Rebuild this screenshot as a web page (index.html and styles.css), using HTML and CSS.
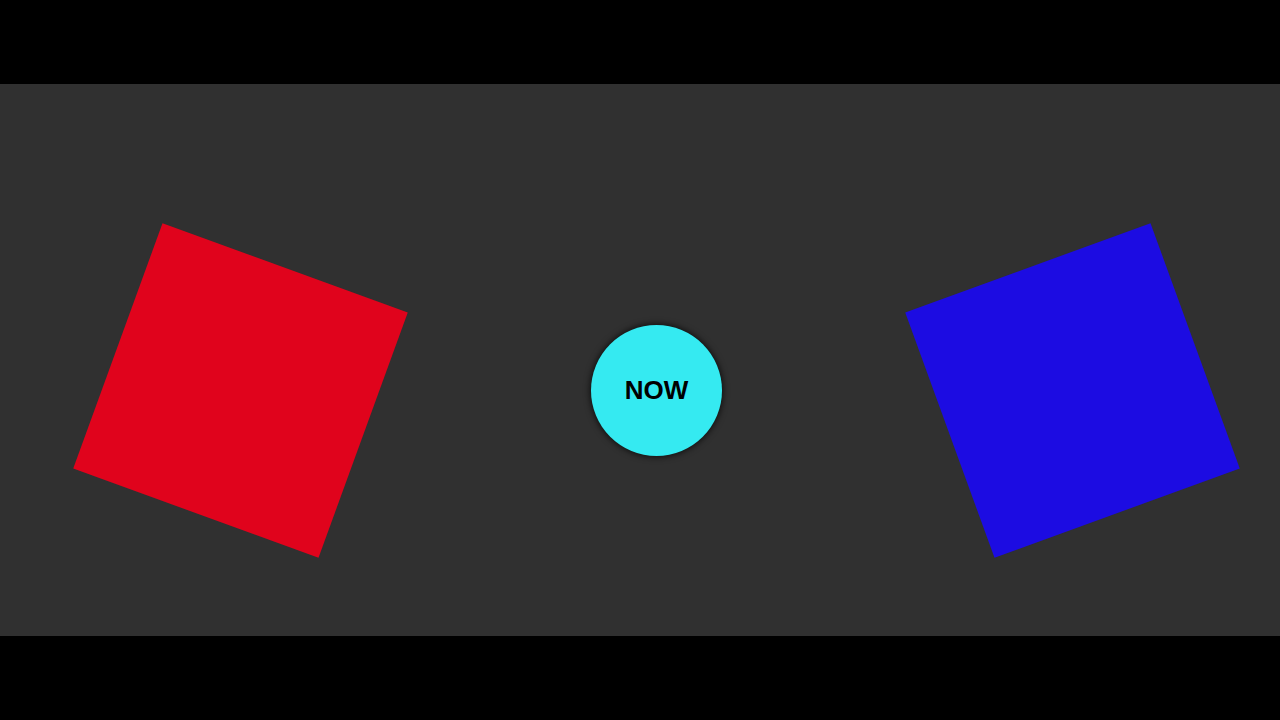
FILE: index.html
```html
<!DOCTYPE html>
<html>
<head>
<meta charset="utf-8">
<link rel="stylesheet" href="styles.css">
</head>
<body>
<div class="bar"></div>
<main class="stage">
  <div class="square red"></div>
  <div class="now">NOW</div>
  <div class="square blue"></div>
</main>
<div class="bar"></div>
</body>
</html>
```
FILE: styles.css
```css
html, body {
  margin: 0;
  padding: 0;
  background: #000;
  width: 1280px;
  height: 720px;
  overflow: hidden;
  font-family: "Liberation Sans", Arial, sans-serif;
}
.bar {
  height: 84px;
  background: #000;
}
.stage {
  height: 552px;
  background: #303030;
  display: flex;
  align-items: center;
  box-sizing: border-box;
  padding-left: 110px;
  padding-top: 60px;
  gap: 220px;
}
.square {
  width: 261px;
  height: 261px;
  flex: none;
}
.red {
  background: #e0031c;
  transform: rotate(20deg);
}
.blue {
  background: #1c0ce2;
  transform: rotate(-20deg);
}
.now {
  width: 131px;
  height: 131px;
  flex: none;
  border-radius: 50%;
  background: #35eaf1;
  box-shadow: 0 0 6px 1px rgba(0, 0, 0, 0.7);
  display: flex;
  align-items: center;
  justify-content: center;
  font-weight: bold;
  font-size: 26px;
  color: #000;
}
```
